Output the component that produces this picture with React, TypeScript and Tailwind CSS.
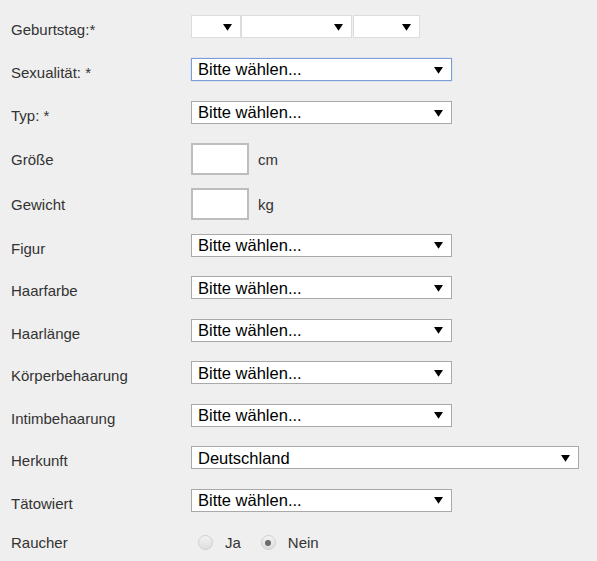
import React from 'react';

const font = { fontFamily: '"Liberation Sans", Arial, sans-serif' };

function Arrow() {
  return (
    <svg width="9" height="8" viewBox="0 0 9 8" className="shrink-0">
      <path d="M0 1h9L4.5 7.8z" fill="#000" />
    </svg>
  );
}

function FakeSelect({ value = 'Bitte wählen...', wide = false, focus = false }: { value?: string; wide?: boolean; focus?: boolean }) {
  return (
    <div
      className={`h-[23px] flex items-center justify-between bg-white pl-[6px] pr-[8px] text-[16.5px] leading-none text-black ${
        wide ? 'w-[388px]' : 'w-[261px]'
      } ${focus ? 'border border-[#7c9ed8] shadow-[0_0_1px_#9fb9e6]' : 'border border-[#a9a9a9]'}`}
    >
      <span>{value}</span>
      <Arrow />
    </div>
  );
}

function DatePart({ w, extra = '' }: { w: string; extra?: string }) {
  return (
    <div className={`h-[23px] ${w} ${extra} flex items-center justify-end pr-[8px] bg-white border border-[#dcdcdc]`}>
      <Arrow />
    </div>
  );
}

function Row({ label, h, shift = true, children }: { label: string; h: string; shift?: boolean; children: React.ReactNode }) {
  return (
    <div className={`flex items-center ${h}`}>
      <div className={`w-[180px] shrink-0 text-[15px] leading-none text-[#333] ${shift ? 'pt-[6px]' : ''}`}>{label}</div>
      <div className="flex items-center">{children}</div>
    </div>
  );
}

function NumInput({ unit }: { unit: string }) {
  return (
    <>
      <div className="w-[58px] h-[32px] bg-white border-2 border-[#bdbdbd]" />
      <span className="ml-[9px] text-[15px] leading-none text-[#333]">{unit}</span>
    </>
  );
}

function Radio({ checked }: { checked?: boolean }) {
  return (
    <div className="w-[15px] h-[15px] rounded-full border border-[#cfcfcf] bg-gradient-to-b from-[#f2f2f2] to-[#dedede] flex items-center justify-center">
      {checked && <div className="w-[6px] h-[6px] rounded-full bg-[#6b6b6b]" />}
    </div>
  );
}

export default function App() {
  const rows = ['Figur', 'Haarfarbe', 'Haarlänge', 'Körperbehaarung', 'Intimbehaarung'];
  return (
    <div className="min-h-screen bg-[#efefef] pt-[5px] pl-[11px] overflow-hidden" style={font}>
      <Row label="Geburtstag:*" h="h-[43px]">
        <DatePart w="w-[50px]" />
        <DatePart w="w-[111px]" />
        <DatePart w="w-[67px]" extra="ml-px" />
      </Row>
      <Row label="Sexualität: *" h="h-[43px]">
        <FakeSelect focus />
      </Row>
      <Row label="Typ: *" h="h-[43px]">
        <FakeSelect />
      </Row>
      <Row label="Größe" h="h-[50px]" shift={false}>
        <NumInput unit="cm" />
      </Row>
      <Row label="Gewicht" h="h-[40px]" shift={false}>
        <NumInput unit="kg" />
      </Row>
      {rows.map((r) => (
        <Row key={r} label={r} h="h-[42.5px]">
          <FakeSelect />
        </Row>
      ))}
      <Row label="Herkunft" h="h-[42.5px]">
        <FakeSelect value="Deutschland" wide />
      </Row>
      <Row label="Tätowiert" h="h-[42.5px]">
        <FakeSelect />
      </Row>
      <Row label="Raucher" h="h-[42.5px]" shift={false}>
        <div className="flex items-center ml-[7px] text-[15px] leading-none text-[#333]">
          <Radio />
          <span className="ml-[12px]">Ja</span>
          <div className="ml-[20px]">
            <Radio checked />
          </div>
          <span className="ml-[12px]">Nein</span>
        </div>
      </Row>
    </div>
  );
}
